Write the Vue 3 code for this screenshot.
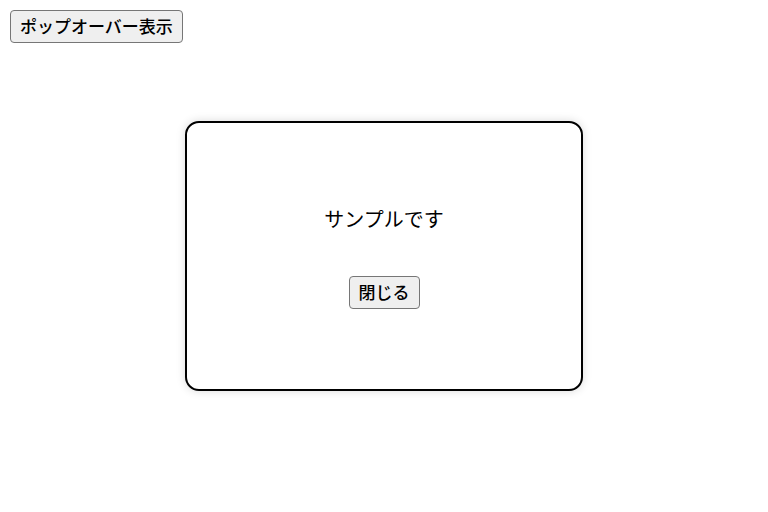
<template>
  <main class="page">
    <button type="button" class="button" @click="isOpen = true">ポップオーバー表示</button>

    <div v-if="isOpen" class="popover" role="dialog" aria-labelledby="popover-text">
      <p id="popover-text" class="popover-text">サンプルです</p>
      <button type="button" class="button" @click="isOpen = false">閉じる</button>
    </div>
  </main>
</template>

<script setup>
import { ref } from "vue";

const isOpen = ref(true);
</script>

<style>
body {
  margin: 0;
  background: #fff;
}
</style>

<style scoped>
.page {
  position: relative;
  box-sizing: border-box;
  min-height: 100vh;
  padding: 10px;
  font-family: "Noto Sans CJK JP", sans-serif;
  color: #000;
}

.button {
  display: block;
  padding: 2px 9px 4px;
  border: 1px solid #767676;
  border-radius: 4px;
  background: #efefef;
  color: #000;
  font-family: inherit;
  font-size: 17px;
  font-weight: 500;
  line-height: 25px;
}

/* centred over the page */
.popover {
  position: absolute;
  inset: 0;
  display: flex;
  flex-direction: column;
  align-items: center;
  gap: 41px;
  width: fit-content;
  height: fit-content;
  margin: auto;
  padding: 80px 137px;
  border: 2px solid #000;
  border-radius: 14px;
  background: #fff;
  box-shadow: 0 0 10px rgba(0, 0, 0, 0.15);
}

.popover-text {
  margin: 0;
  font-size: 20px;
  line-height: 32px;
}
</style>
